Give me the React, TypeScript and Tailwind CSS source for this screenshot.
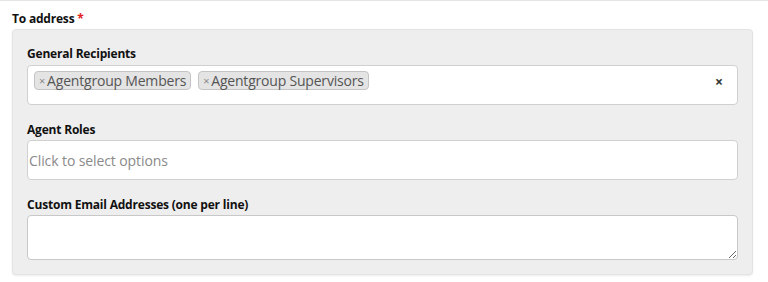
export default function App() {
  const chips = ["Agentgroup Members", "Agentgroup Supervisors"];
  const label = "text-[12px] font-bold leading-[18px] text-[#111] tracking-[-0.2px]";
  return (
    <div
      className="w-[768px] h-[282px] bg-white border-t border-[#e5e5e5] text-[#222]"
      style={{ fontFamily: '"Open Sans", "DejaVu Sans", sans-serif' }}
    >
      <div className="px-3 pt-[9px]">
        <div className={label}>
          To address <span className="text-[#e02020]">*</span>
        </div>
        <div className="mt-[1px] w-[741px] h-[246px] bg-[#eeeeee] rounded-[4px] border border-[#e3e3e3] shadow-[0_1px_2px_rgba(0,0,0,0.08)] px-[14px] pt-[15px]">
          <div className={label}>General Recipients</div>
          <div className="mt-[2px] h-[40px] bg-white border border-[#d0d0d0] rounded-[4px] flex items-start pl-[6px] pr-[14px] pt-[5px]">
            <div className="flex gap-[7px] flex-1">
              {chips.map((c) => (
                <span
                  key={c}
                  className="flex items-center h-[19px] px-[4px] bg-[#e4e4e4] border border-[#c4c4c4] rounded-[4px] text-[14px] tracking-[-0.2px] text-[#555] leading-none"
                >
                  <span className="text-[11px] text-[#888] mr-[2px]">×</span>
                  {c}
                </span>
              ))}
            </div>
            <span className="mt-[4px] text-[14px] font-bold text-[#333] leading-none">×</span>
          </div>
          <div className={`mt-[16px] ${label}`}>Agent Roles</div>
          <div className="mt-[1px] h-[40px] bg-white border border-[#d0d0d0] rounded-[4px] flex items-center px-[1px]">
            <span className="text-[14px] text-[#8a8a8a] tracking-[-0.1px]">Click to select options</span>
          </div>
          <div className={`mt-[16px] ${label}`}>Custom Email Addresses (one per line)</div>
          <textarea className="mt-[1px] block w-full h-[45px] bg-white border border-[#c8c8c8] rounded-[4px] resize-y outline-none" />
        </div>
      </div>
    </div>
  );
}
